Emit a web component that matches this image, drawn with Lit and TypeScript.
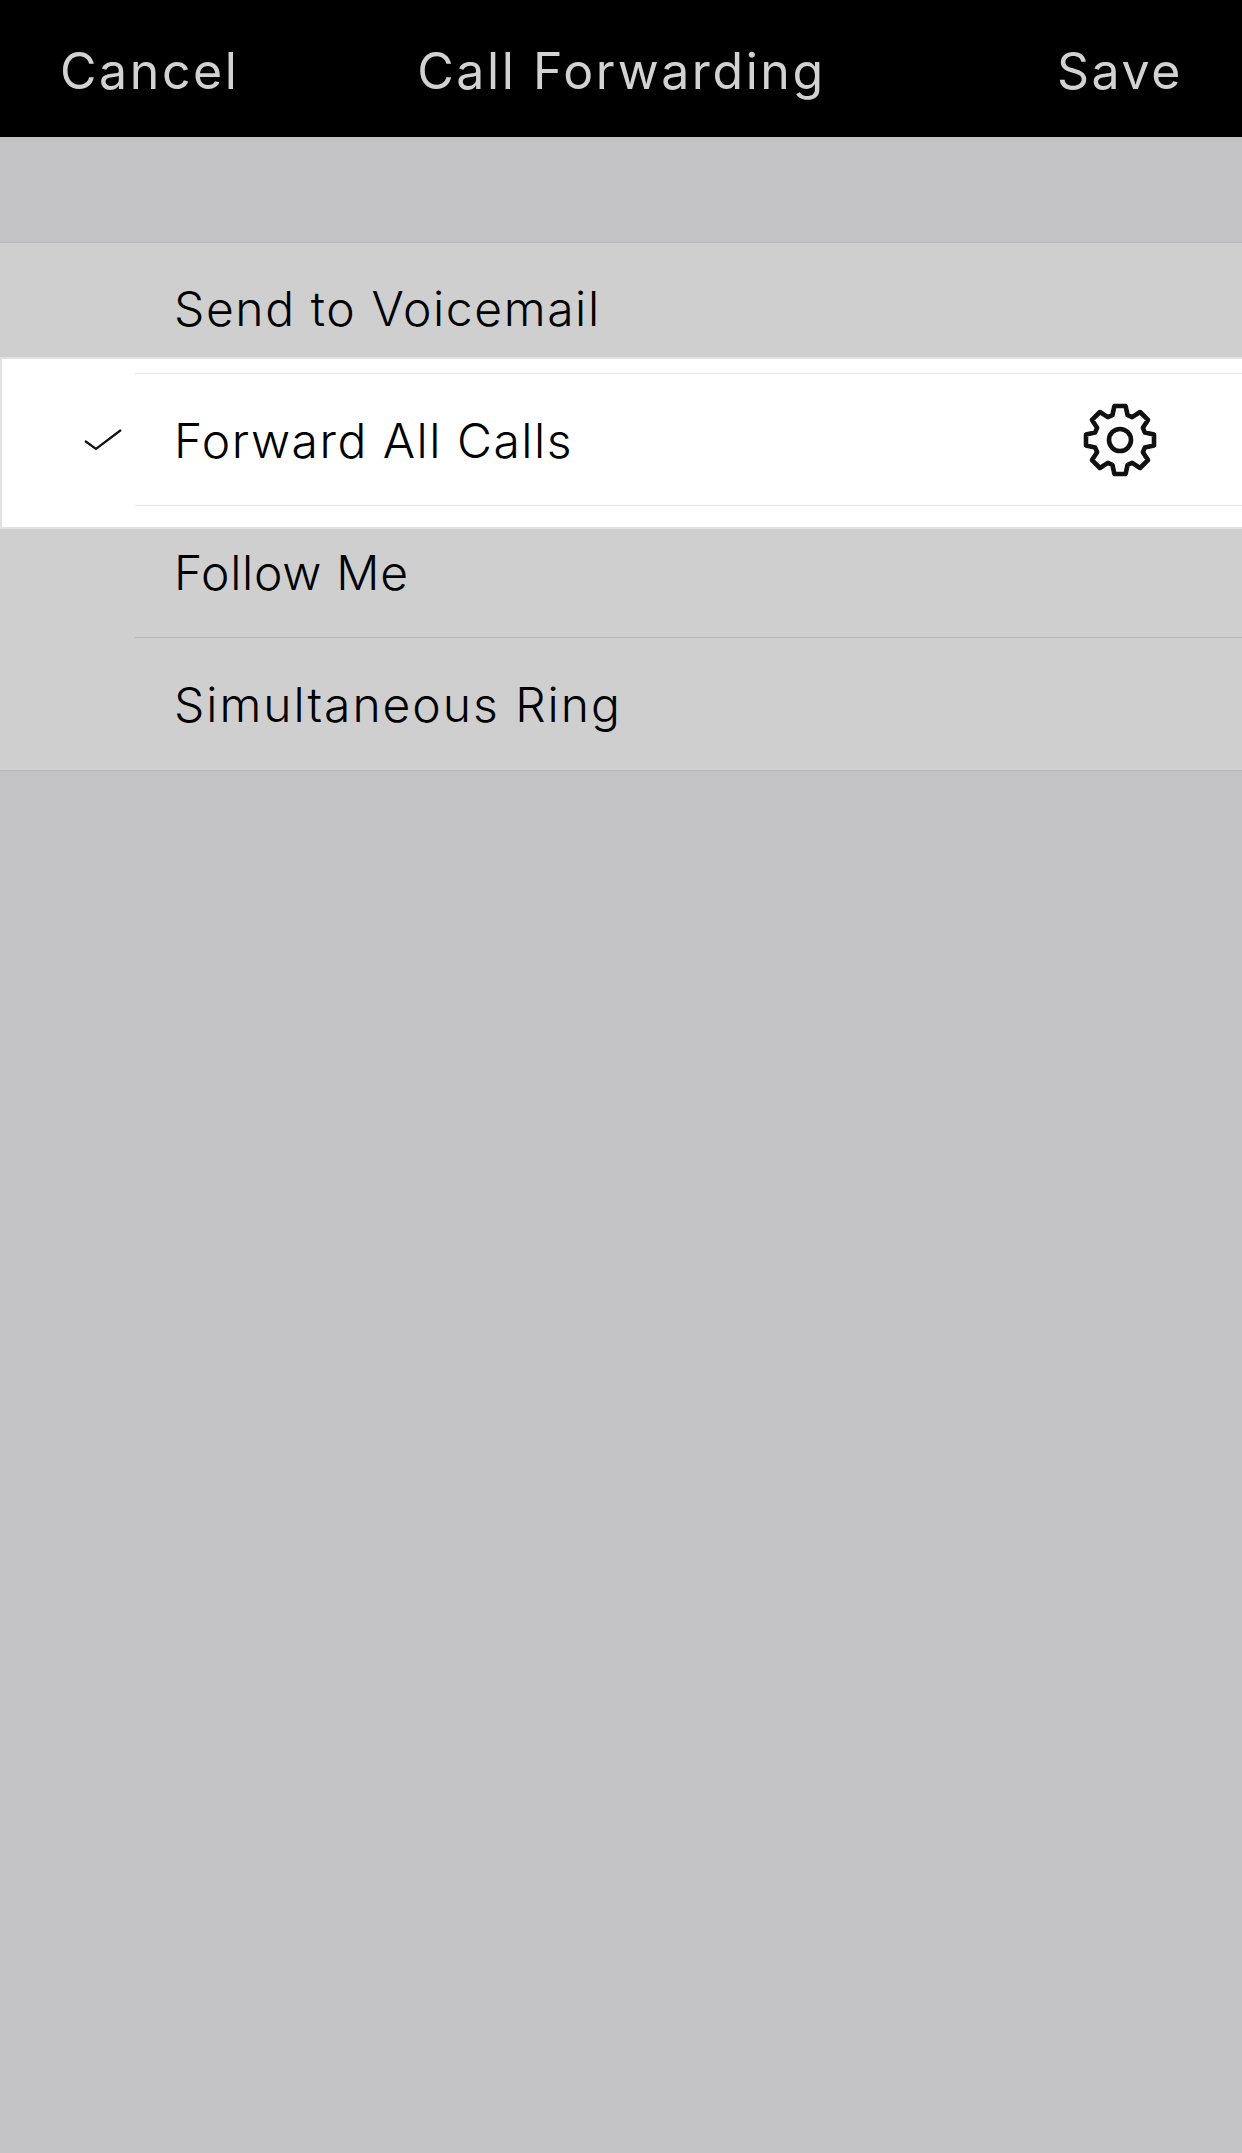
import { LitElement, html, css, svg } from "lit";
import { customElement } from "lit/decorators.js";

function gearPath(cx: number, cy: number): string {
  const teeth = 8, rOut = 34, rIn = 24.8;
  const pts: string[] = [];
  const step = (Math.PI * 2) / teeth;
  for (let i = 0; i < teeth; i++) {
    const a = -Math.PI / 2 + i * step;
    const ux = Math.cos(a), uy = Math.sin(a), vx = -uy, vy = ux;
    const p = (r: number, w: number) =>
      `${(cx + ux * r + vx * w).toFixed(2)} ${(cy + uy * r + vy * w).toFixed(2)}`;
    pts.push(p(rIn, -7.6), p(rOut, -5.6), p(rOut, 5.6), p(rIn, 7.6));
  }
  return "M" + pts.join("L") + "Z";
}

@customElement("app-root")
export class AppRoot extends LitElement {
  static styles = css`
    :host {
      display: block;
      width: 1242px;
      height: 2153px;
      overflow: hidden;
      background: #c3c3c5;
      font-family: Inter, "Liberation Sans", sans-serif;
    }
    .bar {
      height: 137px;
      box-sizing: border-box;
      padding: 5px 59px 0 60px;
      background: #000;
      color: #d2d2d2;
      display: grid;
      grid-template-columns: 1fr auto 1fr;
      align-items: center;
      font-size: 50px;
      font-weight: 400;
      letter-spacing: 2.6px;
    }
    .bar .save { justify-self: end; }
    .list {
      margin-top: 105px;
      border-top: 1px solid #b8b8ba;
      border-bottom: 1px solid #b8b8ba;
      background: #cfcfcf;
      color: #000;
      font-size: 48px;
      font-weight: 300;
    }
    .row {
      position: relative;
      height: 132px;
      box-sizing: border-box;
      display: flex;
      align-items: center;
      padding-left: 174px;
    }
    .row:first-child { height: 131px; }
    .row:last-child .rule { display: none; }
    .rule {
      position: absolute;
      left: 135px;
      right: 0;
      bottom: 0;
      height: 1px;
      background: #b8b8ba;
    }
    .sel::before {
      content: "";
      position: absolute;
      left: 0;
      right: 0;
      top: -17px;
      bottom: -23px;
      background: #fff;
      border: 2px solid #e2e2e2;
      border-right: 0;
      box-sizing: border-box;
    }
    .sel::after {
      content: "";
      position: absolute;
      left: 135px;
      right: 0;
      top: -1px;
      bottom: 0;
      border-top: 1px solid #e4e4e4;
      border-bottom: 1px solid #e4e4e4;
    }
    .sel .rule { display: none; }
    .label { position: relative; z-index: 1; }
    .check {
      position: absolute;
      z-index: 1;
      left: 80px;
      top: 50%;
      margin-top: -16px;
      width: 46px;
      height: 32px;
    }
    .gear {
      position: absolute;
      z-index: 1;
      left: 1080px;
      top: 50%;
      margin-top: -40px;
      width: 80px;
      height: 80px;
    }
  `;

  render() {
    const rows = [
      { label: "Send to Voicemail", tracking: 1.6 },
      { label: "Forward All Calls", tracking: 1.5, selected: true },
      { label: "Follow Me", tracking: 0.7 },
      { label: "Simultaneous Ring", tracking: 1.95 },
    ];
    return html`
      <div class="bar">
        <span>Cancel</span>
        <span>Call Forwarding</span>
        <span class="save">Save</span>
      </div>
      <div class="list">
        ${rows.map(
          (r) => html`
            <div class="row ${r.selected ? "sel" : ""}">
              ${r.selected
                ? html`<svg class="check" viewBox="0 0 46 32" fill="none">
                    ${svg`<path d="M5 17 L16 25 L41 6" stroke="#111" stroke-width="2.2"/>`}
                  </svg>`
                : ""}
              <span class="label" style="letter-spacing:${r.tracking}px">${r.label}</span>
              ${r.selected
                ? html`<svg class="gear" viewBox="0 0 80 80" fill="none">
                    ${svg`<path d=${gearPath(40, 40)} stroke="#111" stroke-width="4.6" stroke-linejoin="round"/>
                    <circle cx="40" cy="40" r="11" stroke="#111" stroke-width="4.6"/>`}
                  </svg>`
                : ""}
              <div class="rule"></div>
            </div>
          `
        )}
      </div>
    `;
  }
}
